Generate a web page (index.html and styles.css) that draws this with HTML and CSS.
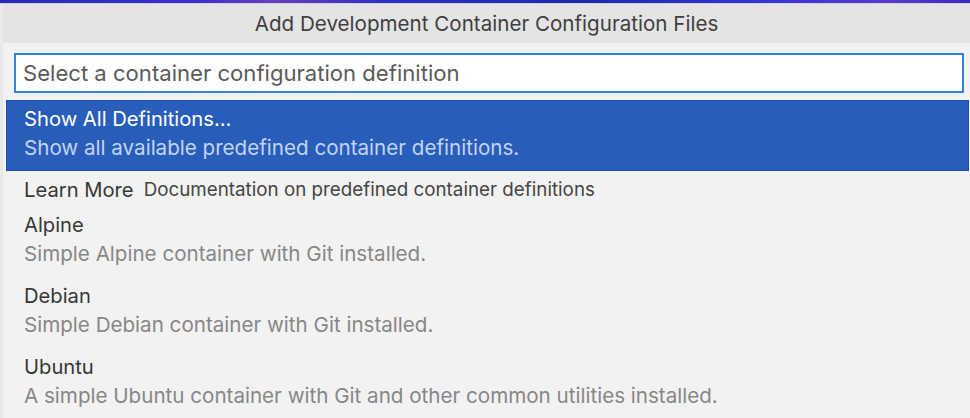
FILE: index.html
```html
<!DOCTYPE html>
<html>
<head>
<meta charset="utf-8">
<link rel="stylesheet" href="styles.css">
</head>
<body>
<div class="desktop-strip"></div>
<div class="dialog">
  <div class="titlebar">Add Development Container Configuration Files</div>
  <div class="input-wrap">
    <div class="input">Select a container configuration definition</div>
  </div>
  <ul class="list">
    <li class="item two selected">
      <div class="label">Show All Definitions...</div>
      <div class="desc">Show all available predefined container definitions.</div>
    </li>
    <li class="item one">
      <span class="label">Learn More</span><span class="inline-desc">Documentation on predefined container definitions</span>
    </li>
    <li class="item two">
      <div class="label">Alpine</div>
      <div class="desc">Simple Alpine container with Git installed.</div>
    </li>
    <li class="item two">
      <div class="label">Debian</div>
      <div class="desc">Simple Debian container with Git installed.</div>
    </li>
    <li class="item two">
      <div class="label">Ubuntu</div>
      <div class="desc">A simple Ubuntu container with Git and other common utilities installed.</div>
    </li>
  </ul>
</div>
</body>
</html>
```
FILE: styles.css
```css
* { box-sizing: border-box; }
html, body {
  margin: 0;
  padding: 0;
  width: 970px;
  height: 418px;
  overflow: hidden;
  background: #f2f2f2;
  font-family: Inter, "Noto Sans", "Liberation Sans", sans-serif;
}
.desktop-strip {
  height: 4px;
  background: linear-gradient(90deg, #2a2ab0 0%, #3b2fc9 20%, #6a3fb8 28%, #2f2fc0 40%, #1e2aa8 60%, #3a35d0 80%, #5a3ac8 92%, #3a2ab8 100%);
  border-bottom: 1px solid #cfd0e8;
}
.dialog {
  border-left: 3px solid #e9e9e9;
  background: #f2f2f2;
}
.titlebar {
  height: 39px;
  background: #e4e4e4;
  color: #3f3f3f;
  font-size: 20.6px;
  display: flex;
  align-items: center;
  justify-content: center;
}
.input-wrap {
  padding: 10px 6px 7px 11px;
}
.input {
  height: 40px;
  background: #fff;
  border: 2px solid #3184e4;
  color: #5a5a5a;
  font-size: 22.1px;
  display: flex;
  align-items: center;
  padding-left: 7px;
}
.list {
  list-style: none;
  margin: 0;
  padding: 0 0 0 3px;
}
.item {
  padding-left: 18px;
  color: #373737;
}
.item.two {
  height: 71px;
  display: flex;
  flex-direction: column;
  padding-top: 6px;
}
.item.one {
  height: 36px;
  display: flex;
  align-items: center;
  padding-top: 1px;
}
.label {
  font-size: 20.2px;
  line-height: 24px;
}
.desc {
  font-size: 20.6px;
  line-height: 24px;
  margin-top: 5px;
  color: #878787;
}
.inline-desc {
  font-size: 18.8px;
  color: #454545;
  margin-left: 10px;
}
.item.selected {
  background: #285dba;
  border: 1px solid #1c4fbd;
  padding-left: 17px;
  padding-top: 6px;
  margin-right: 1px;
}
.item.selected .label { color: #ffffff; }
.item.selected .desc { color: #c3d3ef; }
```
